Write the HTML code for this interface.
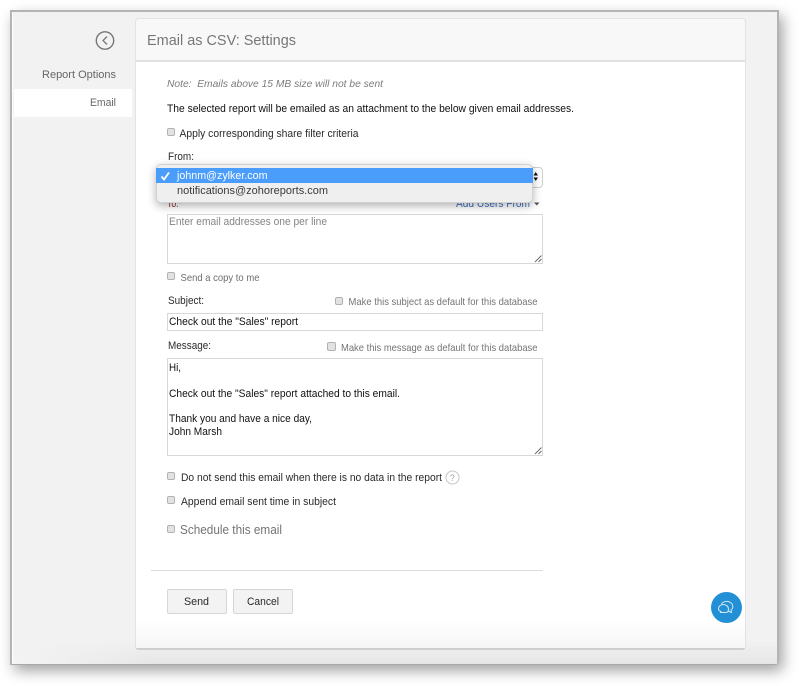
<!DOCTYPE html>
<html><head><meta charset="utf-8"><style>
html,body{margin:0;padding:0;background:#fff;width:799px;height:686px;overflow:hidden}
#all{position:absolute;left:0;top:0;width:799px;height:686px;filter:blur(.35px)}
.a{position:absolute;box-sizing:border-box}
#win{left:10px;top:10px;width:769px;height:655px;background:#f2f2f2;border:2px solid #b4b4b4;border-bottom:1px solid #a8a8a8;box-shadow:4px 6px 14px rgba(0,0,0,.36);border-radius:0 0 4px 0}
#fade{left:12px;top:640px;width:765px;height:24px;background:linear-gradient(90deg,#f4f4f4,#e6e6e6 18%,#e6e6e6);-webkit-mask-image:linear-gradient(#0000,#000);mask-image:linear-gradient(#0000,#000)}
#panel{left:135px;top:18px;width:611px;height:632px;background:#fff;border:1px solid #e2e2e2;border-bottom:2px solid #cfcfcf;border-radius:4px}
#pfade{left:136px;top:620px;width:609px;height:28px;background:linear-gradient(#fff0,#f6f6f6)}
#head{left:136px;top:19px;width:609px;height:43px;background:#f8f8f8;border-bottom:2px solid #e1e1e1;border-radius:4px 4px 0 0}
.f{background:#fff;border:1px solid #d8d8d8}
.c{width:8px;height:8px;background:#e2e2e2;border:1px solid #b2b2b2;border-radius:2px}
.b{width:60px;height:25px;background:#f3f3f3;border:1px solid #d6d6d6;border-radius:2px}
svg{position:absolute;left:0;top:0}
text{font-family:"Liberation Sans",sans-serif;font-size:11px;fill:#111}
</style></head><body><div id="all">
<div class="a" id="win"></div><div class="a" id="fade"></div>
<div class="a" style="left:12px;top:12px;width:1px;height:651px;background:#fff"></div>
<div class="a" style="left:14px;top:89px;width:118px;height:28px;background:#fff"></div>
<div class="a" id="panel"></div><div class="a" id="pfade"></div><div class="a" id="head"></div>

<div class="a f" style="left:420px;top:167px;width:123px;height:21px;border-radius:4px;border-color:#cfcfcf"></div>
<div class="a f" style="left:167px;top:214px;width:376px;height:50px"></div>
<div class="a f" style="left:167px;top:313px;width:376px;height:18px"></div>
<div class="a f" style="left:167px;top:358px;width:376px;height:98px"></div>
<div class="a" style="left:151px;top:570px;width:392px;height:1px;background:#dcdcdc"></div>
<div class="a b" style="left:167px;top:589px"></div>
<div class="a b" style="left:233px;top:589px"></div>

<div class="a c" style="left:167px;top:128px"></div>
<div class="a c" style="left:167px;top:272px"></div>
<div class="a c" style="left:335px;top:297px"></div>
<div class="a c" style="left:327px;top:342px;width:9px;height:9px"></div>
<div class="a c" style="left:167px;top:472px"></div>
<div class="a c" style="left:167px;top:496px"></div>
<div class="a c" style="left:167px;top:525px"></div>

<svg width="799" height="686" viewBox="0 0 799 686">
<circle cx="105" cy="40.5" r="8.7" fill="none" stroke="#777" stroke-width="1.4"/>
<path d="M107 36.5L103 40.5L107 44.5" fill="none" stroke="#777" stroke-width="1.3"/>
<text x="42" y="78" textLength="74" lengthAdjust="spacingAndGlyphs" style="fill:#666">Report Options</text>
<text x="90" y="106" textLength="26" lengthAdjust="spacingAndGlyphs" style="fill:#666">Email</text>
<text x="147" y="45" textLength="149" lengthAdjust="spacingAndGlyphs" style="font-size:14.5px;fill:#777">Email as CSV: Settings</text>
<text x="167" y="87" textLength="216" lengthAdjust="spacingAndGlyphs" style="font-style:italic;fill:#7c7c7c;font-size:10.5px">Note:&#160; Emails above 15 MB size will not be sent</text>
<text x="167" y="112" textLength="407" lengthAdjust="spacingAndGlyphs">The selected report will be emailed as an attachment to the below given email addresses.</text>
<text x="179.500" y="137" textLength="179" lengthAdjust="spacingAndGlyphs" style="fill:#2a2a2a">Apply corresponding share filter criteria</text>
<text x="168" y="160" textLength="26" lengthAdjust="spacingAndGlyphs" style="fill:#2a2a2a">From:</text>
<path d="M533.500 175.500L535.700 172L538 175.500ZM533.500 177.500L535.700 181L538 177.500Z" fill="#111"/>
<text x="167" y="207" textLength="15" lengthAdjust="spacingAndGlyphs" style="fill:#8a2b2b">To:*</text>
<text x="456" y="207" textLength="74" lengthAdjust="spacingAndGlyphs" style="fill:#3f6fbf">Add Users From</text>
<path d="M534 202.500H539.500L536.750 205.500Z" fill="#555"/>
<text x="169" y="225" textLength="158" lengthAdjust="spacingAndGlyphs" style="fill:#858585">Enter email addresses one per line</text>
<path d="M535 262L541.500 255.500M538.500 262L541.500 259" stroke="#666" stroke-width=".9"/>
<text x="180.500" y="281" textLength="79" lengthAdjust="spacingAndGlyphs" style="font-size:10.500px;fill:#6e6e6e">Send a copy to me</text>
<text x="168" y="304" textLength="36" lengthAdjust="spacingAndGlyphs" style="fill:#2a2a2a">Subject:</text>
<text x="348.500" y="305" textLength="189" lengthAdjust="spacingAndGlyphs" style="font-size:10.500px;fill:#747474">Make this subject as default for this database</text>
<text x="169" y="325" textLength="129" lengthAdjust="spacingAndGlyphs">Check out the "Sales" report</text>
<text x="168" y="349" textLength="43" lengthAdjust="spacingAndGlyphs" style="fill:#2a2a2a">Message:</text>
<text x="341" y="351" textLength="196.500" lengthAdjust="spacingAndGlyphs" style="font-size:10.500px;fill:#747474">Make this message as default for this database</text>
<text x="169" y="371" textLength="12" lengthAdjust="spacingAndGlyphs">Hi,</text>
<text x="169" y="397" textLength="231" lengthAdjust="spacingAndGlyphs">Check out the "Sales" report attached to this email.</text>
<text x="169" y="422" textLength="143" lengthAdjust="spacingAndGlyphs">Thank you and have a nice day,</text>
<text x="169" y="435" textLength="53" lengthAdjust="spacingAndGlyphs">John Marsh</text>
<path d="M535 454L541.500 447.500M538.500 454L541.500 451" stroke="#666" stroke-width=".9"/>
<text x="181" y="481" textLength="261" lengthAdjust="spacingAndGlyphs" style="fill:#2a2a2a">Do not send this email when there is no data in the report</text>
<circle cx="452.500" cy="477.500" r="6.500" fill="#fff" stroke="#c6c6c6"/>
<text x="449.800" y="481" style="font-size:9px;fill:#a0a0a0">?</text>
<text x="181" y="505" textLength="155" lengthAdjust="spacingAndGlyphs" style="fill:#2a2a2a">Append email sent time in subject</text>
<text x="180" y="534" textLength="102" lengthAdjust="spacingAndGlyphs" style="font-size:12.500px;fill:#747474">Schedule this email</text>
<text x="184" y="605" textLength="25" lengthAdjust="spacingAndGlyphs" style="fill:#2a2a2a">Send</text>
<text x="247" y="605" textLength="32" lengthAdjust="spacingAndGlyphs" style="fill:#2a2a2a">Cancel</text>

<circle cx="726.500" cy="607.500" r="15.500" fill="#2390d6"/>
<path d="M721.500 604C722.500 601.500 727.500 600.500 730.500 602.500C733.500 604.500 733.500 608.500 731 610L731.500 612.500L728 611" fill="none" stroke="#d5e9f7" stroke-width="1"/>
<path d="M718.500 609C718.500 606 721 604.500 723.500 604.500C726 604.500 728.500 606.500 728.500 609C728.500 611 727.500 612.500 725.500 612.500H720.500L721 611.500C719.500 611 718.500 610 718.500 609Z" fill="#2390d6" stroke="#d5e9f7" stroke-width="1"/>
</svg>

<div class="a" style="left:156px;top:164px;width:377px;height:39px;background:#efefef;border:1px solid #d2d2d2;border-radius:5px;box-shadow:0 3px 9px rgba(0,0,0,.3)"></div>
<div class="a" style="left:156px;top:168px;width:377px;height:15px;background:#4b9dfb"></div>
<svg width="799" height="686" viewBox="0 0 799 686">
<path d="M161.500 176.500L164 179.500L169 172.500" fill="none" stroke="#fff" stroke-width="1.800"/>
<text x="177" y="179" textLength="90.500" lengthAdjust="spacingAndGlyphs" style="fill:#fff">johnm@zylker.com</text>
<text x="177" y="194" textLength="151" lengthAdjust="spacingAndGlyphs" style="fill:#3a3a3a">notifications@zohoreports.com</text>
</svg>
</div></body></html>
